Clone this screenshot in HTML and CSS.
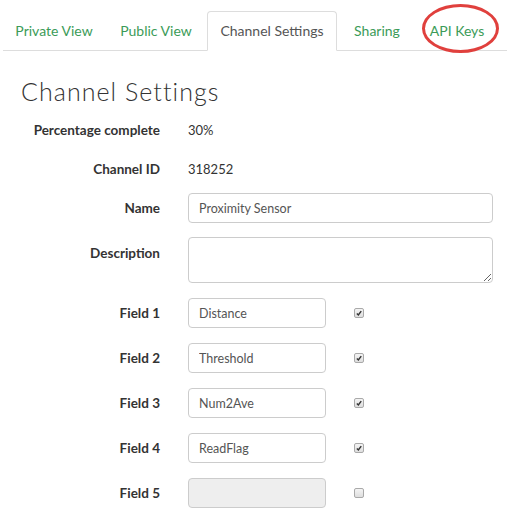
FILE: index.html
```html
<!DOCTYPE html>
<html>
<head>
<meta charset="utf-8">
<link rel="stylesheet" href="styles.css">
</head>
<body>
<div class="page">
  <ul class="tabs">
    <li class="tab tab-private"><a>Private View</a></li>
    <li class="tab tab-public"><a>Public View</a></li>
    <li class="tab tab-settings active"><a>Channel Settings</a></li>
    <li class="tab tab-sharing"><a>Sharing</a></li>
    <li class="tab tab-api"><a>API Keys</a></li>
  </ul>
  <span class="highlight"></span>

  <h2 class="title">Channel Settings</h2>

  <div class="form">
    <div class="row row-static">
      <div class="label">Percentage complete</div>
      <div class="value">30%</div>
    </div>
    <div class="row row-static">
      <div class="label">Channel ID</div>
      <div class="value">318252</div>
    </div>
    <div class="row">
      <div class="label">Name</div>
      <input class="input input-wide" type="text" value="Proximity Sensor">
    </div>
    <div class="row row-top">
      <div class="label">Description</div>
      <textarea class="input textarea"></textarea>
    </div>
    <div class="row row-field first-field">
      <div class="label">Field 1</div>
      <input class="input input-field" type="text" value="Distance">
      <span class="check on"><svg viewBox="0 0 10 10" width="10" height="10"><path d="M2.3 5.6 L4.2 7.4 L7.8 2.6" fill="none" stroke="#333" stroke-width="1.8"/></svg></span>
    </div>
    <div class="row row-field">
      <div class="label">Field 2</div>
      <input class="input input-field" type="text" value="Threshold">
      <span class="check on"><svg viewBox="0 0 10 10" width="10" height="10"><path d="M2.3 5.6 L4.2 7.4 L7.8 2.6" fill="none" stroke="#333" stroke-width="1.8"/></svg></span>
    </div>
    <div class="row row-field">
      <div class="label">Field 3</div>
      <input class="input input-field" type="text" value="Num2Ave">
      <span class="check on"><svg viewBox="0 0 10 10" width="10" height="10"><path d="M2.3 5.6 L4.2 7.4 L7.8 2.6" fill="none" stroke="#333" stroke-width="1.8"/></svg></span>
    </div>
    <div class="row row-field">
      <div class="label">Field 4</div>
      <input class="input input-field" type="text" value="ReadFlag">
      <span class="check on"><svg viewBox="0 0 10 10" width="10" height="10"><path d="M2.3 5.6 L4.2 7.4 L7.8 2.6" fill="none" stroke="#333" stroke-width="1.8"/></svg></span>
    </div>
    <div class="row row-field">
      <div class="label">Field 5</div>
      <input class="input input-field" type="text" value="" disabled>
      <span class="check"></span>
    </div>
  </div>
</div>
</body>
</html>
```

FILE: styles.css
```css
html, body {
  margin: 0;
  padding: 0;
  background: #fff;
}

body {
  font-family: "Lato", "Liberation Sans", sans-serif;
  color: #333;
}

.page {
  position: relative;
  width: 507px;
  height: 516px;
  overflow: hidden;
}

.tabs {
  list-style: none;
  margin: 0 0 0 3px;
  padding: 11px 0 0 0;
  display: flex;
  border-bottom: 1px solid #ddd;
}

.tab {
  box-sizing: border-box;
  height: 40px;
  margin-bottom: -1px;
  margin-right: 2px;
  display: flex;
  align-items: center;
  justify-content: center;
  border: 1px solid transparent;
  border-radius: 4px 4px 0 0;
  font-size: 14px;
  color: #3b9b58;
}

.tab a {
  display: block;
  line-height: 20px;
}

.tab-private { width: 102px; }
.tab-public { width: 98px; }
.tab-settings { width: 130px; }
.tab-sharing { width: 76px; }
.tab-api { width: 80px; margin-right: 0; }

.tab.active {
  background: #fff;
  border-color: #ddd;
  border-bottom-color: transparent;
  color: #555;
}

.highlight {
  position: absolute;
  left: 422px;
  top: 4px;
  width: 71px;
  height: 43px;
  border: 3px solid #e0403d;
  border-radius: 50%;
}

.title {
  margin: 25px 0 0 21px;
  height: 30px;
  font-family: "Lato", "Liberation Sans", sans-serif;
  font-weight: 300;
  font-size: 25px;
  line-height: 30px;
  letter-spacing: 1.05px;
  color: #333;
}

.form {
  margin-top: 9px;
  display: flex;
  flex-direction: column;
}

.row {
  display: flex;
  align-items: center;
  height: 30px;
  margin-bottom: 9px;
}

.row-top {
  align-items: flex-start;
  height: 46px;
  margin-bottom: 15px;
  margin-top: 5px;
}

.row-top .label {
  padding-top: 6px;
}

.row-field {
  margin-bottom: 15px;
}

.label {
  box-sizing: border-box;
  width: 160px;
  flex: none;
  text-align: right;
  font-size: 13.5px;
  font-weight: 700;
  line-height: 20px;
  color: #333;
}

.value {
  margin-left: 28px;
  font-size: 13px;
  color: #333;
}

.input {
  box-sizing: border-box;
  margin: 0 0 0 28px;
  height: 30px;
  border: 1px solid #ccc;
  border-radius: 4px;
  padding: 0 10px;
  font-family: "Lato", "Liberation Sans", sans-serif;
  font-size: 12.5px;
  color: #555;
  background: #fff;
  outline: none;
}

.input-wide {
  width: 305px;
}

.textarea {
  width: 305px;
  height: 46px;
  padding: 6px 10px;
  resize: vertical;
}

.input-field {
  width: 138px;
}

.input[disabled] {
  background: #eee;
  border-color: #ccc;
}

.check {
  box-sizing: border-box;
  margin-left: 28px;
  width: 10px;
  height: 10px;
  border: 1px solid #a9a9a9;
  border-radius: 2px;
  background: linear-gradient(#f4f4f4, #dedede);
  display: flex;
  align-items: center;
  justify-content: center;
}

.check svg {
  display: block;
  width: 8px;
  height: 8px;
}
```
